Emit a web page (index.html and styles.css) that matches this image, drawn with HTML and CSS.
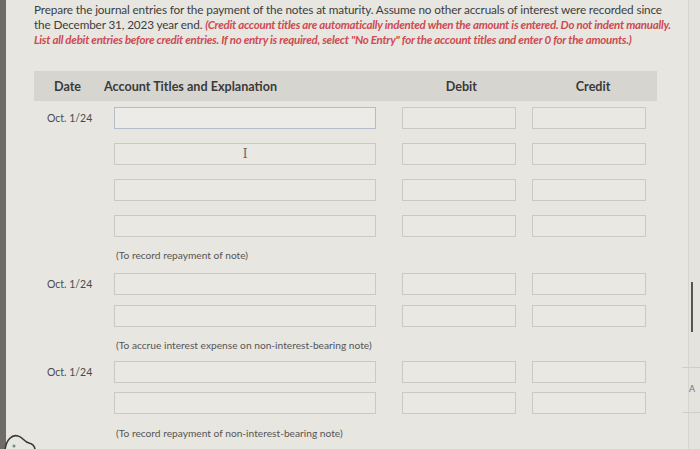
FILE: index.html
```html
<!DOCTYPE html>
<html>
<head>
<meta charset="utf-8">
<link rel="stylesheet" href="styles.css">
</head>
<body>
<div class="edge"></div>
<main class="page">
  <p class="instr">Prepare the journal entries for the payment of the notes at maturity. Assume no other accruals of interest were recorded since<br>the December 31, 2023 year end. <em class="red">(Credit account titles are automatically indented when the amount is entered. Do not indent manually.<br>List all debit entries before credit entries. If no entry is required, select "No Entry" for the account titles and enter 0 for the amounts.)</em></p>

  <div class="head">
    <span class="h-date">Date</span>
    <span class="h-acct">Account Titles and Explanation</span>
    <span class="h-debit">Debit</span>
    <span class="h-credit">Credit</span>
  </div>

  <section class="entry e1">
    <div class="row"><span class="date">Oct. 1/24</span><div class="box acct focus"></div><div class="box num"></div><div class="box num cr"></div></div>
    <div class="row"><span class="date"></span><div class="box acct"><span class="ibeam">I</span></div><div class="box num"></div><div class="box num cr"></div></div>
    <div class="row"><span class="date"></span><div class="box acct"></div><div class="box num"></div><div class="box num cr"></div></div>
    <div class="row"><span class="date"></span><div class="box acct"></div><div class="box num"></div><div class="box num cr"></div></div>
    <p class="note">(To record repayment of note)</p>
  </section>

  <section class="entry e2">
    <div class="row"><span class="date">Oct. 1/24</span><div class="box acct"></div><div class="box num"></div><div class="box num cr"></div></div>
    <div class="row"><span class="date"></span><div class="box acct"></div><div class="box num"></div><div class="box num cr"></div></div>
    <p class="note">(To accrue interest expense on non-interest-bearing note)</p>
  </section>

  <section class="entry e3">
    <div class="row"><span class="date">Oct. 1/24</span><div class="box acct"></div><div class="box num"></div><div class="box num cr"></div></div>
    <div class="row"><span class="date"></span><div class="box acct"></div><div class="box num"></div><div class="box num cr"></div></div>
    <p class="note">(To record repayment of non-interest-bearing note)</p>
  </section>
</main>

<div class="side-line"></div>
<div class="side-rule r1"></div>
<div class="side-rule r2"></div>
<span class="side-a">A</span>
<svg class="blob" width="34" height="22" viewBox="0 0 34 22"><path d="M3 22 C4 12 10 6 16 8 C21 9 22 14 27 15 C31 16 33 19 33 22" fill="none" stroke="#3a3a3a" stroke-width="1.6"/><circle cx="12" cy="18" r="1.5" fill="#6f8f6f"/></svg>
</body>
</html>
```

FILE: styles.css
```css
html, body {
  margin: 0;
  padding: 0;
}
body {
  width: 700px;
  height: 449px;
  overflow: hidden;
  position: relative;
  display: flex;
  background: #e4e3dd;
  font-family: Lato, "Open Sans", "Liberation Sans", sans-serif;
  color: #3b3b3b;
}
.edge {
  width: 6px;
  flex: none;
  background: #6e6c67;
}
.page {
  flex: none;
  width: 654px;
  padding-left: 28px;
  background: #e7e6e1;
  border-right: 1px solid #d6d5cf;
}
.instr {
  margin: 0;
  padding-top: 2px;
  font-size: 11.75px;
  line-height: 15px;
  letter-spacing: -0.14px;
  color: #3d3d3d;
}
.red {
  color: #cf4a52;
  font-size: 11.5px;
  font-weight: 700;
  font-style: italic;
  letter-spacing: -0.26px;
}
.head {
  margin-top: 24px;
  width: 623px;
  height: 30px;
  background: #d6d5d0;
  display: flex;
  align-items: center;
  font-weight: 700;
  font-size: 12.6px;
  color: #3a3a3a;
}
.h-date { margin-left: 20px; width: 50px; }
.h-acct { width: 290px; }
.h-debit { width: 136px; text-align: center; }
.h-credit { width: 128px; text-align: center; }

.entry {
  display: flex;
  flex-direction: column;
}
.e1 { margin-top: 6px; gap: 14px; }
.e2 { margin-top: 11px; gap: 10px; }
.e3 { margin-top: 9px; gap: 9px; }
.row {
  display: flex;
  align-items: center;
  height: 22px;
}
.date {
  width: 80px;
  padding-left: 13px;
  box-sizing: border-box;
  font-size: 10.5px;
  color: #4a4a4a;
}
.box {
  height: 22px;
  box-sizing: border-box;
  border: 1px solid #cac9c3;
  background: #e9e8e3;
}
.acct {
  width: 262px;
  display: flex;
  align-items: center;
  justify-content: center;
}
.focus { border-color: #b3bdc9; background: #ecebe7; }
.num { width: 114px; margin-left: 26px; }
.num.cr { margin-left: 16px; }
.ibeam {
  font-family: "DejaVu Serif", "Liberation Serif", serif;
  font-size: 12px;
  color: #666;
}
.note {
  margin: 3px 0 0 82px;
  font-size: 10.2px;
  line-height: 14px;
  color: #555;
}
.e1 .note { margin-top: -3px; }
.e2 .note { margin-top: 1px; }

.side-line {
  position: absolute;
  left: 691px;
  top: 282px;
  width: 1.5px;
  height: 50px;
  background: #555;
}
.side-rule {
  position: absolute;
  left: 682px;
  width: 18px;
  height: 1px;
  background: #cfcec8;
}
.r1 { top: 367px; }
.r2 { top: 412px; }
.side-a {
  position: absolute;
  left: 689px;
  top: 383px;
  font-size: 9px;
  color: #777;
}
.blob {
  position: absolute;
  left: 2px;
  top: 428px;
}
```
